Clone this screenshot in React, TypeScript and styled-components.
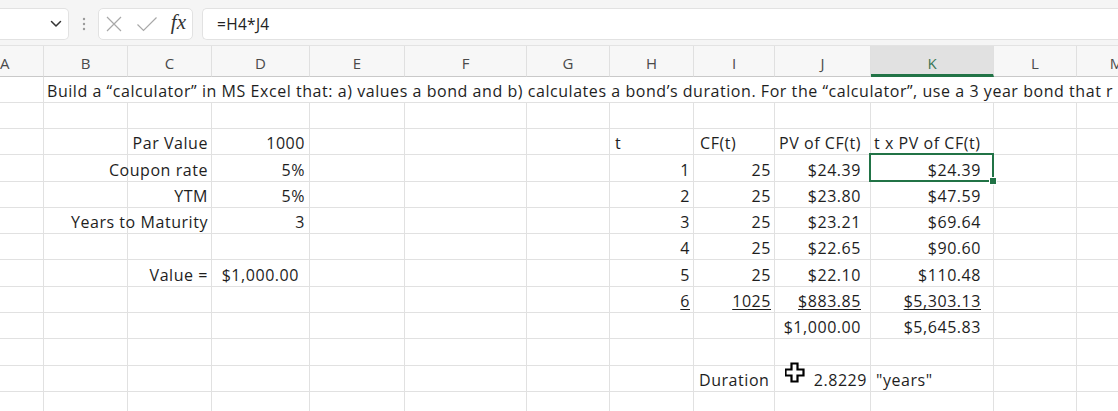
import React from "react";
import styled, { createGlobalStyle } from "styled-components";

const Global = createGlobalStyle`
  html, body { margin: 0; padding: 0; background: #ffffff; overflow: hidden; }
  #root { width: 1118px; height: 411px; overflow: hidden; }
`;

const COLS = [44, 84, 84, 98, 95, 122, 83, 84, 81, 96, 123, 83, 80];
const LETTERS = ["A", "B", "C", "D", "E", "F", "G", "H", "I", "J", "K", "L", "M"];
const ROW_HEIGHTS = [26, 26, 26, 27, 26, 26, 26, 27, 26, 26, 27, 26, 26];

const Page = styled.div`
  width: 1118px;
  height: 411px;
  overflow: hidden;
  display: flex;
  flex-direction: column;
  background: #fff;
`;

const Toolbar = styled.div`
  height: 46px;
  flex: none;
  display: flex;
  align-items: center;
  padding-top: 2px;
  background: #f5f5f5;
  box-sizing: border-box;
  border-bottom: 1px solid #e3e3e3;
`;

const NameBox = styled.div`
  width: 69px;
  height: 32px;
  box-sizing: border-box;
  background: #fff;
  border: 1px solid #e2e2e2;
  border-left: none;
  border-radius: 0 5px 5px 0;
  display: flex;
  align-items: center;
  justify-content: flex-end;
  padding-right: 6px;
`;

const Dots = styled.div`
  width: 29px;
  display: flex;
  justify-content: center;
`;

const ButtonGroup = styled.div`
  width: 95px;
  height: 32px;
  box-sizing: border-box;
  background: #fff;
  border: 1px solid #e2e2e2;
  border-radius: 5px;
  display: flex;
  align-items: center;
  justify-content: space-between;
  padding: 0 6px 0 6px;
`;

const Fx = styled.span`
  font-family: "Liberation Serif", "DejaVu Serif", serif;
  font-style: italic;
  font-size: 21px;
  line-height: 1;
  color: #333;
  margin-top: -3px;
`;

const FormulaInput = styled.div`
  flex: 1;
  margin-left: 9px;
  height: 32px;
  box-sizing: border-box;
  background: #fff;
  border: 1px solid #e2e2e2;
  border-right: none;
  border-radius: 5px 0 0 5px;
  display: flex;
  align-items: center;
  padding-left: 14px;
  font-family: "Open Sans", "Noto Sans", sans-serif;
  font-size: 15.5px;
  letter-spacing: 0.3px;
  color: #222;
`;

const Sheet = styled.div`
  position: relative;
  flex: 1;
  display: grid;
  grid-template-columns: ${COLS.map((c) => c + "px").join(" ")};
  grid-template-rows: 31px ${ROW_HEIGHTS.map((h) => h + "px").join(" ")};
  font-family: "Open Sans", "Noto Sans", sans-serif;
  font-size: 16px;
  letter-spacing: 0.55px;
  color: #1e1e1e;
`;

const HeaderCell = styled.div<{ $active?: boolean; $align?: string }>`
  box-sizing: border-box;
  display: flex;
  align-items: center;
  justify-content: ${(p) => p.$align || "center"};
  background: ${(p) => (p.$active ? "#e1e1e1" : "#f7f7f7")};
  border-right: 1px solid #e0e0e0;
  border-bottom: ${(p) => (p.$active ? "3px solid #217346" : "1px solid #c9c9c9")};
  font-family: "Open Sans", "Noto Sans", sans-serif;
  font-size: 15px;
  letter-spacing: 0;
  color: ${(p) => (p.$active ? "#3b7656" : "#4a4a4a")};
  padding-top: ${(p) => (p.$active ? "6px" : "4px")};
  overflow: hidden;
  white-space: nowrap;
`;

const Cell = styled.div<{ $align?: "left" | "right"; $pad?: number; $u?: boolean }>`
  box-sizing: border-box;
  position: relative;
  display: flex;
  align-items: flex-end;
  justify-content: ${(p) => (p.$align === "right" ? "flex-end" : "flex-start")};
  padding: 0 ${(p) => (p.$align === "right" ? p.$pad ?? 3 : 3)}px 0
    ${(p) => (p.$align === "right" ? 3 : p.$pad ?? 4)}px;
  border-right: 1px solid #e1e1e1;
  border-bottom: 1px solid #e1e1e1;
  white-space: nowrap;
  text-decoration: ${(p) => (p.$u ? "underline" : "none")};
  text-underline-offset: 2px;
  line-height: 22px;
`;

const SpanCell = styled(Cell)`
  grid-column: 2 / -1;
  overflow: hidden;
  border-right: none;
`;

const Selection = styled.div`
  position: absolute;
  left: -2px;
  top: -2px;
  right: -1px;
  bottom: -1px;
  border: 2px solid #217346;
  pointer-events: none;
  z-index: 2;
`;

const Handle = styled.div`
  position: absolute;
  right: -5px;
  bottom: -5px;
  width: 6px;
  height: 6px;
  background: #217346;
  border: 1px solid #fff;
`;

const Cursor = styled.svg`
  position: absolute;
  left: 785px;
  top: 316px;
  z-index: 3;
`;

type CellDef = { t: string; a?: "left" | "right"; u?: boolean; pad?: number };

const data: Record<number, Record<number, CellDef>> = {
  3: {
    2: { t: "Par Value", a: "right" },
    3: { t: "1000", a: "right", pad: 4 },
    7: { t: "t", pad: 5 },
    8: { t: "CF(t)", pad: 6 },
    9: { t: "PV of CF(t)", pad: 4 },
    10: { t: "t x PV of CF(t)", pad: 3 },
  },
  4: {
    2: { t: "Coupon rate", a: "right" },
    3: { t: "5%", a: "right", pad: 4 },
    7: { t: "1", a: "right" },
    8: { t: "25", a: "right" },
    9: { t: "$24.39", a: "right", pad: 9 },
    10: { t: "$24.39", a: "right", pad: 12 },
  },
  5: {
    2: { t: "YTM", a: "right" },
    3: { t: "5%", a: "right", pad: 4 },
    7: { t: "2", a: "right" },
    8: { t: "25", a: "right" },
    9: { t: "$23.80", a: "right", pad: 9 },
    10: { t: "$47.59", a: "right", pad: 12 },
  },
  6: {
    2: { t: "Years to Maturity", a: "right" },
    3: { t: "3", a: "right", pad: 4 },
    7: { t: "3", a: "right" },
    8: { t: "25", a: "right" },
    9: { t: "$23.21", a: "right", pad: 9 },
    10: { t: "$69.64", a: "right", pad: 12 },
  },
  7: {
    7: { t: "4", a: "right" },
    8: { t: "25", a: "right" },
    9: { t: "$22.65", a: "right", pad: 9 },
    10: { t: "$90.60", a: "right", pad: 12 },
  },
  8: {
    2: { t: "Value =", a: "right" },
    3: { t: "$1,000.00", a: "right", pad: 10 },
    7: { t: "5", a: "right" },
    8: { t: "25", a: "right" },
    9: { t: "$22.10", a: "right", pad: 9 },
    10: { t: "$110.48", a: "right", pad: 12 },
  },
  9: {
    7: { t: "6", a: "right", u: true },
    8: { t: "1025", a: "right", u: true },
    9: { t: "$883.85", a: "right", pad: 9, u: true },
    10: { t: "$5,303.13", a: "right", pad: 12, u: true },
  },
  10: {
    9: { t: "$1,000.00", a: "right", pad: 9 },
    10: { t: "$5,645.83", a: "right", pad: 12 },
  },
  12: {
    8: { t: "Duration", pad: 5 },
    9: { t: "2.8229", a: "right", pad: 3 },
    10: { t: "\"years\"", pad: 5 },
  },
};

const Chevron = () => (
  <svg width="12" height="8" viewBox="0 0 12 8">
    <path d="M1.5 1.5 L6 6 L10.5 1.5" fill="none" stroke="#333" strokeWidth="1.5" strokeLinecap="round" strokeLinejoin="round" />
  </svg>
);

const XIcon = () => (
  <svg width="18" height="18" viewBox="0 0 18 18">
    <path d="M2 2 L16 16 M16 2 L2 16" stroke="#a8a8a8" strokeWidth="1.2" fill="none" />
  </svg>
);

const CheckIcon = () => (
  <svg width="22" height="18" viewBox="0 0 22 18">
    <path d="M1.5 9.5 L7.5 15.5 L20.5 2.5" stroke="#a8a8a8" strokeWidth="1.2" fill="none" />
  </svg>
);

const VDots = () => (
  <svg width="4" height="16" viewBox="0 0 4 16">
    <circle cx="2" cy="3" r="1.2" fill="#9a9a9a" />
    <circle cx="2" cy="8" r="1.2" fill="#9a9a9a" />
    <circle cx="2" cy="13" r="1.2" fill="#9a9a9a" />
  </svg>
);

export default function App() {
  const rows = [];
  for (let r = 1; r <= 13; r++) {
    if (r === 1) {
      rows.push(<Cell key="1-0" />);
      rows.push(
        <SpanCell key="1-1" $pad={3}>
          Build a “calculator” in MS Excel that: a) values a bond and b) calculates a bond’s duration. For the “calculator”, use a 3 year bond that r
        </SpanCell>
      );
      continue;
    }
    for (let c = 0; c < COLS.length; c++) {
      const d = data[r]?.[c];
      rows.push(
        <Cell key={`${r}-${c}`} $align={d?.a} $pad={d?.pad} $u={d?.u}>
          {d?.t}
          {r === 4 && c === 10 && (
            <Selection>
              <Handle />
            </Selection>
          )}
        </Cell>
      );
    }
  }
  return (
    <Page>
      <Global />
      <Toolbar>
        <NameBox>
          <Chevron />
        </NameBox>
        <Dots>
          <VDots />
        </Dots>
        <ButtonGroup>
          <XIcon />
          <CheckIcon />
          <Fx>fx</Fx>
        </ButtonGroup>
        <FormulaInput>=H4*J4</FormulaInput>
      </Toolbar>
      <Sheet>
        {LETTERS.map((l) => (
          <HeaderCell key={l} $active={l === "K"} $align={l === "A" ? "flex-start" : "center"}>
            {l}
          </HeaderCell>
        ))}
        {rows}
        <Cursor width="20" height="21" viewBox="0 0 20 21">
          <path
            d="M6.5 1.5 H12.5 V7.5 H18.5 V13.5 H12.5 V19.5 H6.5 V13.5 H0.5 V7.5 H6.5 Z"
            fill="#fff"
            stroke="#000"
            strokeWidth="2.2"
          />
        </Cursor>
      </Sheet>
    </Page>
  );
}
